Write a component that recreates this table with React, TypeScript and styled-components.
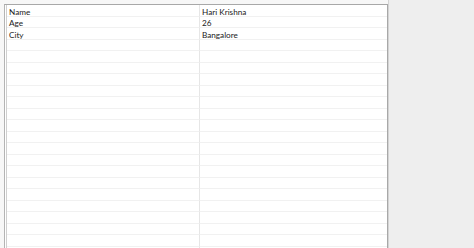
import React from 'react';
import styled, { createGlobalStyle } from 'styled-components';

const GlobalStyle = createGlobalStyle`
  html, body {
    margin: 0;
    padding: 0;
    background: #f0f0f0;
    overflow: hidden;
  }
`;

const Page = styled.div`
  display: flex;
  width: 474px;
  height: 248px;
  background: #efefef;
`;

const LeftPane = styled.div`
  width: 389px;
  height: 248px;
  box-sizing: border-box;
  padding: 4px 0 0 4px;
  background: #f7f7f7;
  border-right: 1px solid #d4d4d4;
`;

const TableBox = styled.div`
  height: 100%;
  box-sizing: border-box;
  border-top: 1px solid #a8a8a8;
  border-left: 1px solid #b4b4b4;
  border-right: 1px solid #a8a8a8;
  box-shadow: inset 1px 0 0 #fff, inset 2px 0 0 #cfcfcf;
  background: #fff;
  overflow: hidden;
`;

const Grid = styled.div`
  display: grid;
  grid-template-columns: 193px 1fr;
  grid-auto-rows: 11.5px;
  margin-left: 2px;
`;

const Cell = styled.div<{ $last?: boolean }>`
  box-sizing: border-box;
  padding: 1.5px 0 0 2px;
  border-bottom: 1px solid #f1f1f1;
  border-right: ${(p) => (p.$last ? 'none' : '1px solid #e6e6e6')};
  font-family: Lato, 'Noto Sans', sans-serif;
  font-size: 8.2px;
  line-height: 10px;
  color: #1a1a1a;
  white-space: nowrap;
`;

const Spare = styled.div`
  flex: 1;
  background: #eeeeee;
`;

const rows: [string, string][] = [
  ['Name', 'Hari Krishna'],
  ['Age', '26'],
  ['City', 'Bangalore'],
];

const TOTAL_ROWS = 22;

export default function App() {
  const all: [string, string][] = [...rows];
  while (all.length < TOTAL_ROWS) all.push(['', '']);
  return (
    <>
      <GlobalStyle />
      <Page>
        <LeftPane>
          <TableBox>
            <Grid>
              {all.map(([k, v], i) => (
                <React.Fragment key={i}>
                  <Cell>{k}</Cell>
                  <Cell $last>{v}</Cell>
                </React.Fragment>
              ))}
            </Grid>
          </TableBox>
        </LeftPane>
        <Spare />
      </Page>
    </>
  );
}
